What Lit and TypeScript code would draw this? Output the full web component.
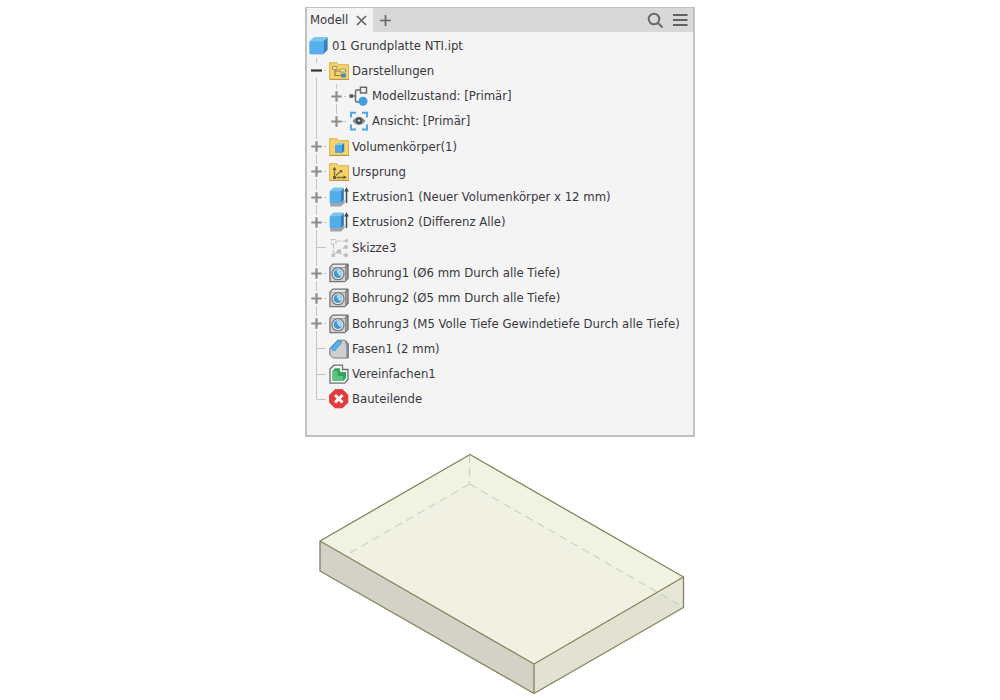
import { LitElement, html, svg, css, nothing } from "lit";
import { customElement, property, state } from "lit/decorators.js";

type Row = {
  icon: string;
  label: string;
  level: number;
  /** "open" and "closed" rows carry a toggle, others are leaves */
  toggle?: "open" | "closed";
  last?: boolean;
};

const ROWS: Row[] = [
  { icon: "part", label: "01 Grundplatte NTI.ipt", level: 0 },
  { icon: "views", label: "Darstellungen", level: 1, toggle: "open" },
  { icon: "state", label: "Modellzustand: [Primär]", level: 2, toggle: "closed" },
  { icon: "eye", label: "Ansicht: [Primär]", level: 2, toggle: "closed", last: true },
  { icon: "solids", label: "Volumenkörper(1)", level: 1, toggle: "closed" },
  { icon: "origin", label: "Ursprung", level: 1, toggle: "closed" },
  { icon: "extrude", label: "Extrusion1 (Neuer Volumenkörper x 12 mm)", level: 1, toggle: "closed" },
  { icon: "extrude", label: "Extrusion2 (Differenz Alle)", level: 1, toggle: "closed" },
  { icon: "sketch", label: "Skizze3", level: 1 },
  { icon: "hole", label: "Bohrung1 (Ø6 mm Durch alle Tiefe)", level: 1, toggle: "closed" },
  { icon: "hole", label: "Bohrung2 (Ø5 mm Durch alle Tiefe)", level: 1, toggle: "closed" },
  { icon: "hole", label: "Bohrung3 (M5 Volle Tiefe Gewindetiefe Durch alle Tiefe)", level: 1, toggle: "closed" },
  { icon: "chamfer", label: "Fasen1 (2 mm)", level: 1 },
  { icon: "simplify", label: "Vereinfachen1", level: 1 },
  { icon: "end", label: "Bauteilende", level: 1, last: true },
];

const folder = svg`
  <path d="M.7 1.700h7.300l1.500 2h10v14.500H.7z" fill="#f7d369" stroke="#d9b04c"/>
  <path d="M.5 18.500h19.500" stroke="#b8954a"/>`;

const ICONS: Record<string, unknown> = {
  part: svg`
    <path d="M.5 6q0-.8.6-1.300L4.500 1.500q.5-.5 1.300-.5h12q.8 0 .8.8v11.700q0 .6-.5 1L15 17.800q-.5.500-1.200.500H1.500q-1 0-1-1z" fill="#7cc4f2"/>
    <path d="M14.500 5.500l4-4v12.200l-4 4.200z" fill="#3483bb"/>
    <path d="M.5 5.500h14v12.800H1.500q-1 0-1-1z" fill="#55b0ec"/>`,
  views: svg`${folder}
    <path d="M6 8v6.500h6M6 10h5" fill="none" stroke="#8f8055" stroke-width="1.200"/>
    <path d="M3.500 5.500h4.500v3H3.500zM11 8h5.500v3H11z" fill="#f8e6a4" stroke="#a09060"/>
    <path d="M12 12.500h5v4h-5z" fill="#4a8fb8"/>`,
  state: svg`
    <path d="M2 10h4.500M11.500 4H8q-1.500 0-1.500 1.500v9q0 1.500 1.500 1.500h2" fill="none" stroke="#6a6a6a" stroke-width="1.500"/>
    <path d="M.5 8.300H4v3.500H.5z" fill="#555"/>
    <path d="M11.500 1.200h6v5.800h-6z" fill="#f5f5f5" stroke="#6a6a6a" stroke-width="1.500"/>
    <circle cx="14" cy="15.300" r="4.500" fill="#409be0"/>`,
  eye: svg`
    <path d="M2 6.500V1.700h5M13 1.700h5v4.800M18 13.500v5h-5M7 18.500H2v-5" fill="none" stroke="#47a6ea" stroke-width="1.900"/>
    <path d="M3.500 10q6.500-8.500 13 0-6.500 8-13 0z" fill="#848b90"/>
    <circle cx="10" cy="9.800" r="3.300" fill="#4a5157"/><circle cx="10" cy="9.600" r="1.200" fill="#cfd6db"/>`,
  solids: svg`${folder}
    <path d="M6 8l2.200-2h7v8l-2.200 2H6z" fill="#8bcdf0"/>
    <path d="M13 8l2.200-2v8L13 16z" fill="#2f81b5"/>
    <path d="M6 8h7v8H6z" fill="#4da7e2"/>`,
  origin: svg`${folder}
    <path d="M5.500 6v9M7.500 15.500h8M7 13.500l4.500-4" fill="none" stroke="#7b6b3f" stroke-width="1.300"/>
    <path d="M3.500 8l2-3.300 2 3.300zM14.500 13.300l3.300 2-3.300 2zM10 8h3.200v3.200zM4 14h3v3H4z" fill="#6b5f3c"/>`,
  extrude: svg`
    <path d="M1.500 15.500l3 0h7.500l3.500-3v3.500l-3.500 3.500H1z" fill="#a3a3a3"/>
    <path d="M.8 4.500q0-.6.500-1L3.800 1q.5-.500 1-.500h9.200q.8 0 .8.800v11.500q0 .6-.4 1L12 16.200H1.800q-1 0-1-1z" fill="#7cc4f0"/>
    <path d="M11.800 4.200l3-3v11.900l-3 3z" fill="#3480b6"/>
    <path d="M.8 4.200h11v12h-10q-1 0-1-1z" fill="#52adea"/>
    <path d="M17.500 3v13" stroke="#4a4a4a" stroke-width="1.500"/><path d="M15.200 4.500l2.300-4.500 2.300 4.500z" fill="#444"/>`,
  sketch: svg`
    <path d="M2.500 1.500h4.500v4.500H2.500zM4.500 6.500v9M8 3h8M9 14l7-5M9 14l7 3.500M9 14l-5 3" fill="none" stroke="#c2c2c2" stroke-width="1.200" stroke-dasharray="4 1.500"/>
    <path d="M16 1.200h3v3h-3zM2.500 15.500h3.500V19H2.500z" fill="#c4c4c4"/>
    <circle cx="17" cy="9" r="2" fill="#bcbcbc"/><circle cx="10" cy="13.500" r="2.300" fill="#bcbcbc"/><circle cx="17" cy="17.300" r="2" fill="#bcbcbc"/>`,
  hole: svg`
    <path d="M.3 4L3.500.5h15q1.200 0 1.200 1.200v13.800L16 19.300H1.300q-1 0-1-1z" fill="#6f6f6f"/>
    <path d="M1.500 4.500L4 1.700h13.500L15.500 4z" fill="#e8e8e8"/>
    <path d="M16.500 4.500l2-2V15l-2 2.500z" fill="#989898"/>
    <path d="M1.500 4.500h14.700v13.600H1.500z" fill="#cfcfcf"/>
    <circle cx="9" cy="10.700" r="6" fill="#f3f5f6" stroke="#747b80" stroke-width="1.300"/>
    <circle cx="9" cy="10.700" r="4.400" fill="#4a96cb"/>
    <path d="M7.500 6.600q5-.8 5.800 4.200-.4 2.400-2.300 2.200-3-1.400-3.500-6.400z" fill="#a9d6f2"/>`,
  chamfer: svg`
    <path d="M.8 9.500L8.500 1.200h7.500l3.500 3.300v14.500H4.500L.8 16z" fill="#cdd0d2" stroke="#7b7b7b"/>
    <path d="M15.500 1.200l4 3.800v14h-2.200V7z" fill="#8b8b8b"/>
    <path d="M1.500 9.500L8.500 1.700q2 0 4.500 1.300L5.500 12z" fill="#59b0ea" stroke="#4596cc"/>`,
  simplify: svg`
    <path d="M1 5l4-3.800h8.500V5.500H19v10l-3.500 3.700H1z" fill="#f6f8f6" stroke="#6b706d" stroke-width="1.300"/>
    <path d="M3.500 7L6 4.200h5V8h6v6l-3 3H3.500z" fill="#37a45b"/>
    <path d="M3.500 7h5v5H14v5H3.500z" fill="#5ac57b"/>`,
  end: svg`
    <path d="M6 .7h7.500L18.800 6v7.500l-5.300 5.300H6L.7 13.500V6z" fill="#e5393e" stroke="#d23a3e"/>
    <path d="M6 6l7.500 7.500M13.500 6L6 13.500" stroke="#fff" stroke-width="3"/>`,
};

@customElement("tree-row")
class TreeRow extends LitElement {
  @property({ attribute: false }) row!: Row;

  static styles = css`
    :host { display: flex; align-items: stretch; padding-left: 2px; }
    .guide {
      flex: none;
      display: flex;
      align-items: center;
      width: 20px;
      padding-left: 2px;
      box-sizing: border-box;
      background: linear-gradient(#c4c4c4, #c4c4c4) 7px 0 / 1px 100% no-repeat;
    }
    .stub {
      background:
        linear-gradient(#c4c4c4, #c4c4c4) 7px 0 / 1px 100% no-repeat,
        linear-gradient(#c4c4c4, #c4c4c4) 8px 50% / 9px 1px no-repeat;
    }
    .short {
      background:
        linear-gradient(#c4c4c4, #c4c4c4) 7px 0 / 1px 100% no-repeat,
        linear-gradient(#c4c4c4, #c4c4c4) 15px 50% / 2px 1px no-repeat;
    }
    .last {
      background:
        linear-gradient(#c4c4c4, #c4c4c4) 7px 0 / 1px 50% no-repeat,
        linear-gradient(#c4c4c4, #c4c4c4) 8px 50% / 9px 1px no-repeat;
    }
    .toggle {
      display: flex;
      padding: 2px 0;
      border: 0;
      background: #f4f4f4;
    }
    .glyph { width: 11px; height: 11px; }
    .icon { flex: none; align-self: center; width: 20px; height: 20px; }
    .label { align-self: center; margin-left: 3px; white-space: nowrap; }
  `;

  render() {
    const { icon, label, level, toggle, last } = this.row;
    const shape = last ? "last" : toggle ? "short" : "stub";
    return html`
      ${level === 2 ? html`<span class="guide"></span>` : nothing}
      ${level > 0
        ? html`<span class="guide ${shape}">
            ${toggle
              ? html`<button class="toggle" aria-label=${`${label} umschalten`}>
                  <svg class="glyph" viewBox="0 0 11 11">
                    ${toggle === "open"
                      ? svg`<path d="M0 5.500h11" stroke="#333" stroke-width="2.200"/>`
                      : svg`<path d="M.3 5.500h10.400M5.500 .3v10.400" stroke="#8c8c8c" stroke-width="2.200"/>`}
                  </svg>
                </button>`
              : nothing}
          </span>`
        : nothing}
      <svg class="icon" viewBox="0 0 20 20">${ICONS[icon]}</svg>
      <span class="label">${label}</span>
    `;
  }
}

@customElement("model-browser")
class ModelBrowser extends LitElement {
  @state() private rows = ROWS;

  static styles = css`
    :host {
      display: flex;
      flex-direction: column;
      box-sizing: border-box;
      border: 2px solid #c2c2c2;
      border-top-width: 1px;
      background: #f4f4f4;
    }
    .bar { display: flex; align-items: stretch; height: 24px; background: #d8d8d8; }
    .tab {
      display: flex;
      align-items: center;
      gap: 8px;
      padding: 0 6px 0 3px;
      background: #f4f4f4;
    }
    .tool {
      display: flex;
      align-items: center;
      padding: 0;
      border: 0;
      background: none;
      font: inherit;
      color: #555;
    }
    .name { color: inherit; }
    .add { margin-left: 7px; }
    .actions { display: flex; gap: 9px; margin-left: auto; padding-right: 5px; }
    .small { width: 11px; height: 11px; }
    .large { width: 16px; height: 16px; }
    .tree { flex: 1; display: grid; grid-auto-rows: 1fr; padding: 1px 0 23px; }
  `;

  render() {
    return html`
      <div class="bar">
        <div class="tab">
          <button class="tool name">Modell</button>
          <button class="tool" aria-label="Schließen">
            <svg class="small" viewBox="0 0 11 11"><path d="M1 1l9 9M10 1l-9 9" stroke="#666" stroke-width="1.700"/></svg>
          </button>
        </div>
        <button class="tool add" aria-label="Hinzufügen">
          <svg class="small" viewBox="0 0 11 11"><path d="M0 5.500h11M5.500 0v11" stroke="#666" stroke-width="1.700"/></svg>
        </button>
        <div class="actions">
          <button class="tool" aria-label="Suchen">
            <svg class="large" viewBox="0 0 16 16" fill="none" stroke="#6a6a6a" stroke-width="2">
              <circle cx="7" cy="7" r="5.300"/><path d="M11 11l4.500 4.500"/>
            </svg>
          </button>
          <button class="tool" aria-label="Menü">
            <svg class="large" viewBox="0 0 16 16"><path d="M1 3h14.500M1 8h14.500M1 13h14.500" stroke="#636363" stroke-width="1.800"/></svg>
          </button>
        </div>
      </div>
      <div class="tree" role="tree">
        ${this.rows.map(
          (row) => html`<tree-row role="treeitem" aria-level=${row.level + 1} .row=${row}></tree-row>`
        )}
      </div>
    `;
  }
}

@customElement("app-root")
class AppRoot extends LitElement {
  static styles = css`
    :host {
      display: flex;
      flex-direction: column;
      align-items: center;
      gap: 13px;
      min-height: 100vh;
      box-sizing: border-box;
      padding-top: 7px;
      background: #fff;
      color: #3a383e;
      font: 13px/16px "DejaVu Sans Condensed", "Noto Sans", sans-serif;
    }
    .browser { width: 39%; min-width: 390px; min-height: 430px; }
    .plate { width: 37.2%; min-width: 372px; }
  `;

  render() {
    return html`
      <model-browser class="browser"></model-browser>
      <svg class="plate" viewBox="314 450 372 246" role="img" aria-label="Grundplatte">
        <path d="M470 454.500L683.500 577 534 664 320 541z" fill="#f1f3e2"/>
        <path d="M469.500 484L662 594.500 534 664 345 555z" fill="#f0f1e2"/>
        <path d="M320 541l214 123v29.500L320 571z" fill="#d2d3c6"/>
        <path d="M534 664l149.500-87v30.500L534 693.500z" fill="#e1e2d2"/>
        <path d="M657 592.500l26.500-15.500v30.500z" fill="#e6e7d9"/>
        <path d="M469.500 455v29M469.500 484L348 554M469.500 484l214 123" fill="none" stroke="#d0d1c6" stroke-width="1.200" stroke-dasharray="8 5"/>
        <path d="M470 454.500L683.500 577v30.500L534 693.500 320 571v-30zM320 541l214 123 149.500-87M534 664v29.500"
          fill="none" stroke="#85835a" stroke-width="1.300" stroke-linejoin="round"/>
      </svg>
    `;
  }
}
